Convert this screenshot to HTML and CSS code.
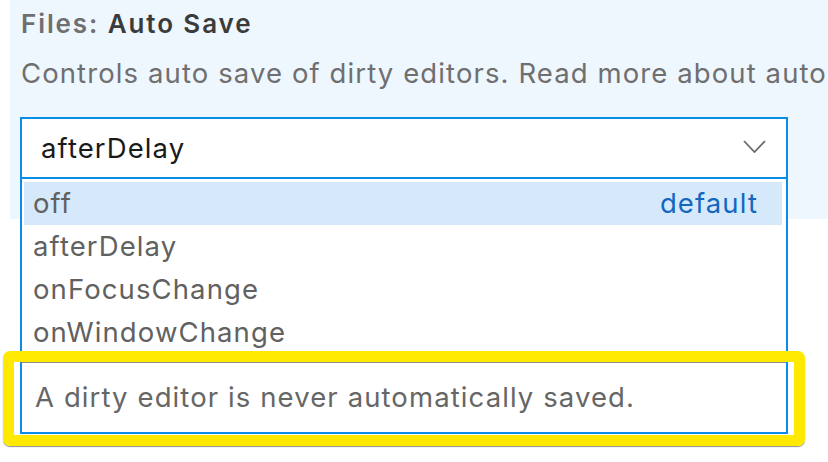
FILE: index.html
```html
<!DOCTYPE html>
<html lang="en">
<head>
<meta charset="utf-8">
<title>Files: Auto Save</title>
<link rel="stylesheet" href="styles.css">
</head>
<body>
<div class="page">
  <section class="setting">
    <h1 class="title"><span class="category">Files: </span><span class="name">Auto Save</span></h1>
    <p class="desc">Controls auto save of dirty editors. Read more about autosave here.</p>
    <div class="select-wrap">
      <div class="select">
        <span class="value">afterDelay</span>
        <svg class="chevron" width="23" height="13" viewBox="0 0 23 13" aria-hidden="true">
          <polyline points="1,1 11.5,12 22,1" fill="none" stroke="#6a6a6a" stroke-width="1.8"/>
        </svg>
      </div>
      <div class="popup">
        <ul class="options">
          <li class="option active"><span>off</span><span class="tag">default</span></li>
          <li class="option"><span>afterDelay</span></li>
          <li class="option"><span>onFocusChange</span></li>
          <li class="option"><span>onWindowChange</span></li>
        </ul>
        <div class="option-desc">A dirty editor is never automatically saved.</div>
      </div>
    </div>
  </section>
  <div class="highlight"></div>
</div>
</body>
</html>
```

FILE: styles.css
```css
html, body {
  margin: 0;
  padding: 0;
  background: #ffffff;
}
body {
  width: 828px;
  height: 462px;
  overflow: hidden;
  font-family: Inter, "Noto Sans", sans-serif;
  font-size: 27.5px;
  letter-spacing: 1.1px;
}
.page {
  position: relative;
  width: 828px;
  height: 462px;
}
.setting {
  margin-left: 10px;
  height: 219px;
  background: #eef6fe;
  padding-top: 8px;
  box-sizing: border-box;
  overflow: visible;
}
.title {
  margin: 0;
  padding-left: 11px;
  font-size: 26px;
  line-height: 32px;
  font-weight: 600;
  letter-spacing: 1.9px;
  white-space: nowrap;
}
.category { color: #6f6f6f; }
.name { color: #3b3b3b; }
.desc {
  margin: 17px 0 0 0;
  padding-left: 11px;
  line-height: 32px;
  color: #6f6f6f;
  white-space: nowrap;
  overflow: hidden;
}
.select-wrap {
  position: relative;
  margin: 28px 0 0 10px;
  width: 768px;
}
.select {
  box-sizing: border-box;
  height: 62px;
  border: 2px solid #0a8ce9;
  background: #ffffff;
  display: flex;
  align-items: center;
  justify-content: space-between;
  padding: 0 20px 0 19px;
}
.value {
  line-height: 32px;
  color: #1a1a1a;
}
.chevron { display: block; margin-top: -4px; }
.popup {
  position: absolute;
  left: 0;
  top: 60px;
  width: 768px;
  box-sizing: border-box;
  border: 2px solid #0a8ce9;
  background: #ffffff;
  padding-top: 3px;
}
.options {
  list-style: none;
  margin: 0;
  padding: 0 4px 0 2px;
}
.option {
  height: 43px;
  display: flex;
  justify-content: space-between;
  align-items: center;
  padding: 0 24px 0 9px;
  line-height: 43px;
  color: #616161;
}
.option.active { background: #d6e9fb; }
.tag { color: #1467bf; }
.option-desc {
  margin-top: 8px;
  border-top: 1px solid #8c8c8c;
  padding: 18px 13px 19px 13px;
  line-height: 32px;
  color: #666666;
}
.highlight {
  position: absolute;
  left: 3px;
  top: 351px;
  width: 802px;
  height: 95px;
  box-sizing: border-box;
  border: 11px solid #ffe900;
  border-radius: 7px;
  box-shadow: 0 1px 1px rgba(0,0,0,0.45);
  pointer-events: none;
}
```
